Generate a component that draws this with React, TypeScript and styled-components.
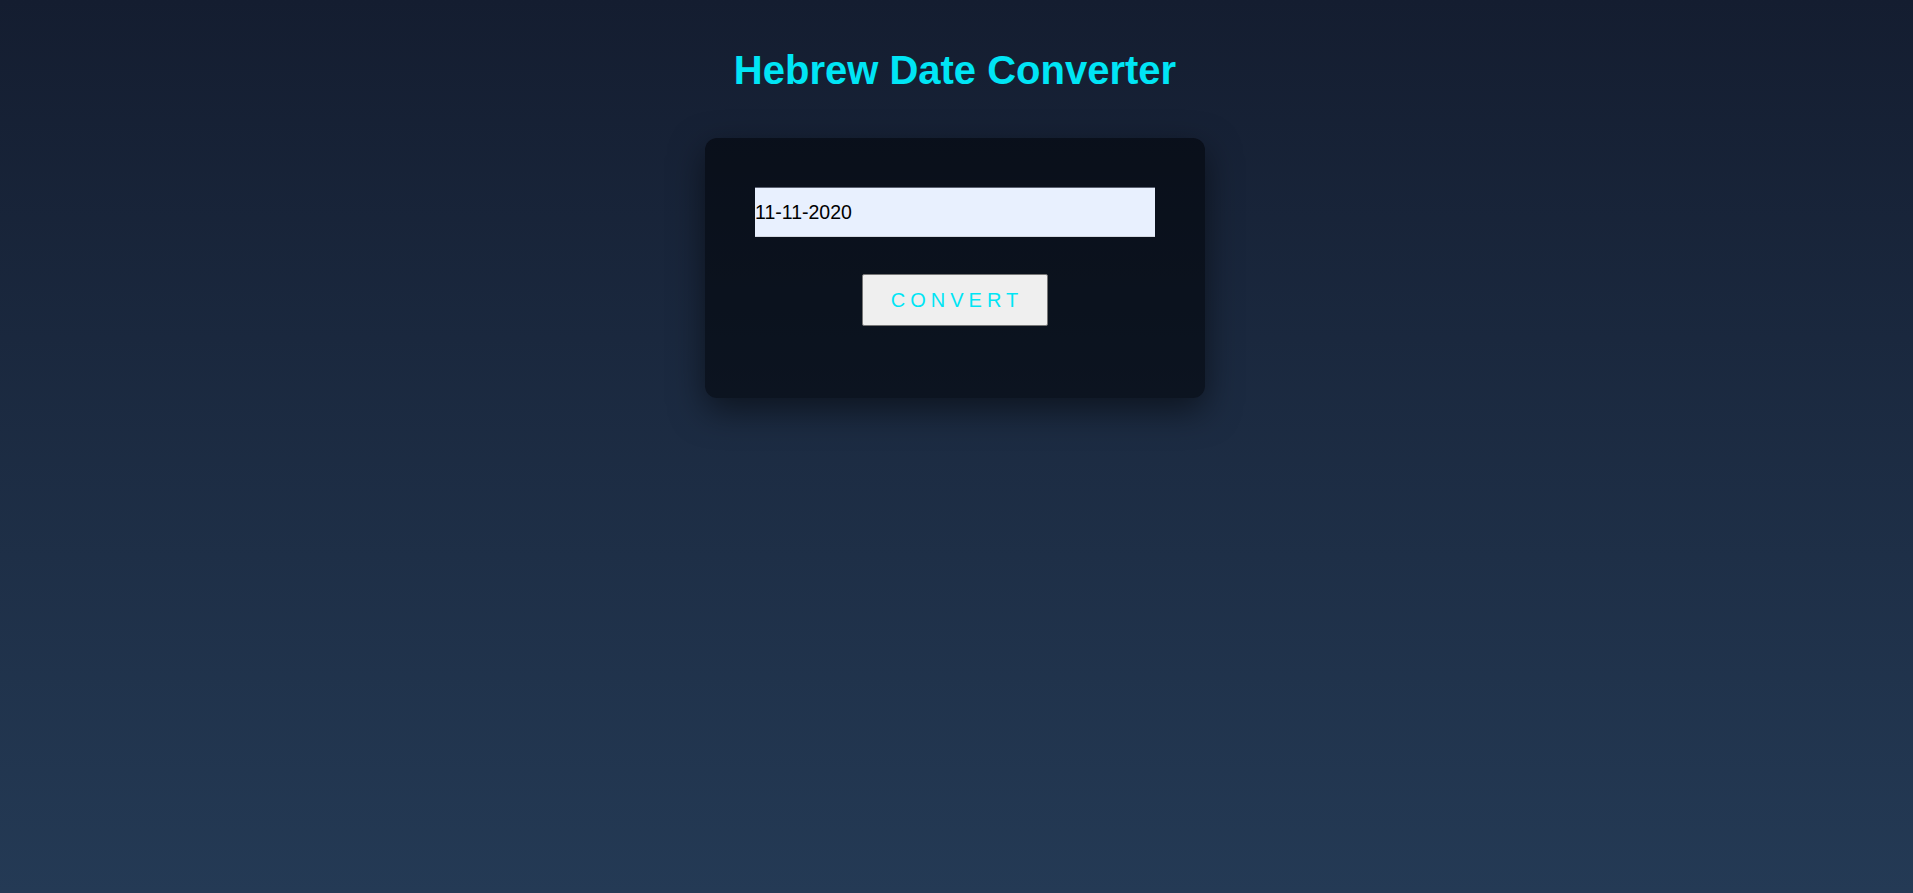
import styled, { createGlobalStyle } from "styled-components";

const GlobalStyle = createGlobalStyle`
  html, body {
    margin: 0;
    padding: 0;
  }
  body {
    min-height: 100vh;
    font-family: "Liberation Sans", Arial, sans-serif;
    background: linear-gradient(180deg, #141d30 0%, #243a55 100%);
  }
`;

const Page = styled.main`
  min-height: 100vh;
  box-sizing: border-box;
  display: flex;
  flex-direction: column;
  align-items: center;
  padding: 47px 3px 0 0;
`;

const Title = styled.h1`
  margin: 0 0 45px;
  font-size: 40px;
  font-weight: 700;
  line-height: 46px;
  color: #00e5f5;
`;

const Card = styled.form`
  box-sizing: border-box;
  width: 500px;
  padding: 49px 50px 72px;
  display: flex;
  flex-direction: column;
  align-items: center;
  gap: 37px;
  background: rgba(0, 2, 6, 0.55);
  border-radius: 12px;
  box-shadow: 0 12px 34px rgba(0, 0, 0, 0.5);
`;

const DateInput = styled.input`
  box-sizing: border-box;
  width: 400px;
  height: 50px;
  padding: 0;
  border: none;
  border-top: 1px solid #5b6171;
  border-bottom: 1px solid #d3d8e0;
  background: #e8f0fe;
  color: #000;
  font-family: "Liberation Sans", Arial, sans-serif;
  font-size: 19.5px;
  outline: none;
`;

const ConvertButton = styled.button`
  box-sizing: border-box;
  width: 186px;
  height: 52px;
  padding: 0 0 0 4px;
  background: #efefef;
  border: 1px solid #767676;
  border-radius: 2px;
  color: #00e5f5;
  font-family: "Liberation Sans", Arial, sans-serif;
  font-size: 20px;
  letter-spacing: 5px;
  text-transform: uppercase;
  cursor: pointer;
`;

export default function App() {
  return (
    <>
      <GlobalStyle />
      <Page>
        <Title>Hebrew Date Converter</Title>
        <Card onSubmit={(e) => e.preventDefault()}>
          <DateInput type="text" defaultValue="11-11-2020" />
          <ConvertButton type="submit">Convert</ConvertButton>
        </Card>
      </Page>
    </>
  );
}
